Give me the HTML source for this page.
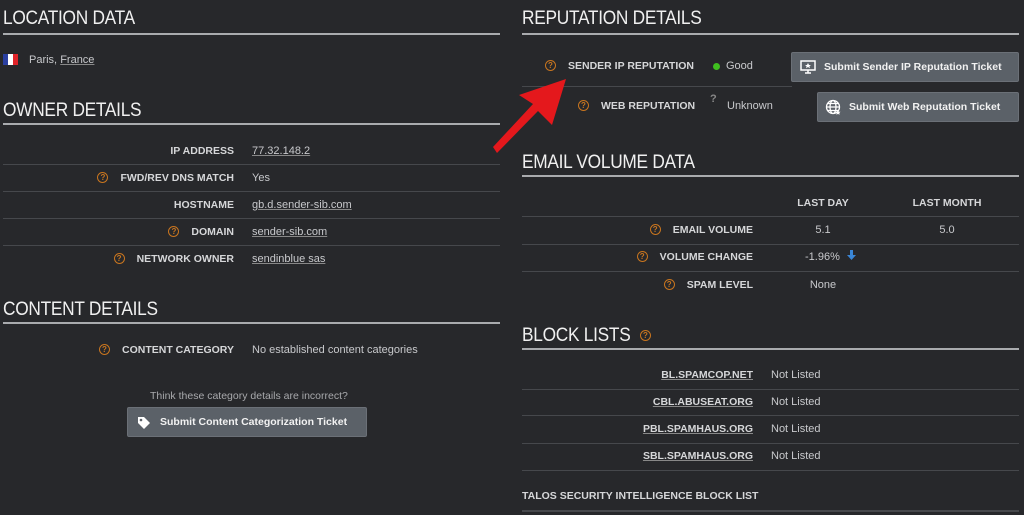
<!DOCTYPE html>
<html><head><meta charset="utf-8"><style>
*{margin:0;padding:0;box-sizing:border-box}
body{width:1024px;height:515px;background:#27282b;font-family:"Liberation Sans",sans-serif;color:#c8c9cc;position:relative;overflow:hidden}
.a{position:absolute;white-space:nowrap}
h2{position:absolute;font-weight:normal;font-size:19px;color:#f0f0f0;letter-spacing:-0.3px;white-space:nowrap;transform:scaleX(0.91);transform-origin:left}
.hl{position:absolute;height:2px;background:#a9abae}
.rl{position:absolute;height:1px;background:#46484c}
.lb{position:absolute;font-size:10.5px;font-weight:bold;color:#d6d7d9;white-space:nowrap;text-align:right;line-height:14px}
.v{position:absolute;font-size:11px;color:#c8c9cc;white-space:nowrap;line-height:14px}
.u{text-decoration:underline;text-decoration-color:#888}
.q{display:inline-block;width:11px;height:11px;border:1.3px solid #c8751f;border-radius:50%;color:#c8751f;font-size:8px;line-height:9px;text-align:center;font-weight:bold;vertical-align:top;margin-top:1px;margin-right:12px}
.btn{position:absolute;background:#5b6168;border:1px solid #6b7077;border-radius:2px;color:#f2f2f2;font-size:10.5px;font-weight:bold;line-height:28px;white-space:nowrap}
</style></head><body>
<!-- LEFT -->
<h2 style="left:3px;top:8px">LOCATION DATA</h2>
<div class="hl" style="left:3px;top:33px;width:497px"></div>
<div class="a" style="left:3px;top:54px;width:15px;height:11px;background:linear-gradient(90deg,#2a3fa0 0 33%,#fff 33% 66%,#e0242a 66%)"></div>
<div class="v" style="left:29px;top:53px">Paris, <span class="u">France</span></div>

<h2 style="left:3px;top:100px">OWNER DETAILS</h2>
<div class="hl" style="left:3px;top:123px;width:497px"></div>
<div class="lb" style="right:790px;top:144px">IP ADDRESS</div><div class="v u" style="left:252px;top:144px">77.32.148.2</div>
<div class="rl" style="left:3px;top:164px;width:497px"></div>
<div class="lb" style="right:790px;top:171px"><span class="q">?</span>FWD/REV DNS MATCH</div><div class="v" style="left:252px;top:171px">Yes</div>
<div class="rl" style="left:3px;top:191px;width:497px"></div>
<div class="lb" style="right:790px;top:198px">HOSTNAME</div><div class="v u" style="left:252px;top:198px">gb.d.sender-sib.com</div>
<div class="rl" style="left:3px;top:218px;width:497px"></div>
<div class="lb" style="right:790px;top:225px"><span class="q">?</span>DOMAIN</div><div class="v u" style="left:252px;top:225px">sender-sib.com</div>
<div class="rl" style="left:3px;top:245px;width:497px"></div>
<div class="lb" style="right:790px;top:252px"><span class="q">?</span>NETWORK OWNER</div><div class="v u" style="left:252px;top:252px">sendinblue sas</div>

<h2 style="left:3px;top:299px">CONTENT DETAILS</h2>
<div class="hl" style="left:3px;top:322px;width:497px"></div>
<div class="lb" style="right:790px;top:343px"><span class="q">?</span>CONTENT CATEGORY</div><div class="v" style="left:252px;top:343px">No established content categories</div>
<div class="v" style="left:150px;top:389px;color:#a8a9ac;font-size:10.5px">Think these category details are incorrect?</div>
<div class="btn" style="left:127px;top:407px;width:240px;height:30px;padding-left:32px">
<svg style="position:absolute;left:9px;top:8px" width="14" height="14" viewBox="0 0 14 14"><path d="M1 1h6l6 6-6 6-6-6z" fill="#fff"/><circle cx="4" cy="4" r="1.3" fill="#5b6168"/></svg>Submit Content Categorization Ticket</div>

<!-- RIGHT -->
<h2 style="left:522px;top:8px">REPUTATION DETAILS</h2>
<div class="hl" style="left:522px;top:33px;width:497px"></div>
<div class="lb" style="left:545px;top:59px"><span class="q">?</span>SENDER IP REPUTATION</div>
<div class="a" style="left:713px;top:63px;width:7px;height:7px;border-radius:50%;background:#3fbf1f"></div>
<div class="v" style="left:726px;top:59px">Good</div>
<div class="btn" style="left:791px;top:52px;width:228px;height:30px;padding-left:32px">
<svg style="position:absolute;left:8px;top:7px" width="16" height="15" viewBox="0 0 16 15"><rect x="1" y="1" width="14" height="9" fill="none" stroke="#fff" stroke-width="1.5"/><path d="M5 13h6M8 10v3" stroke="#fff" stroke-width="1.5"/><path d="M8 3l1 2h2l-1.6 1.2.6 2-2-1.2-2 1.2.6-2L5 5h2z" fill="#fff"/></svg>Submit Sender IP Reputation Ticket</div>
<div class="rl" style="left:522px;top:86px;width:270px"></div>
<div class="lb" style="left:578px;top:99px"><span class="q">?</span>WEB REPUTATION</div>
<div class="v" style="left:710px;top:92px;color:#888;font-weight:bold">?</div>
<div class="v" style="left:727px;top:99px">Unknown</div>
<div class="btn" style="left:817px;top:92px;width:202px;height:30px;padding-left:31px">
<svg style="position:absolute;left:7px;top:6px" width="17" height="17" viewBox="0 0 17 17" fill="none" stroke="#fff" stroke-width="1.3"><circle cx="8" cy="8" r="6.5"/><ellipse cx="8" cy="8" rx="3" ry="6.5"/><path d="M1.5 8h13M2.5 4.5h11M2.5 11.5h11"/><path d="M13 11l.8 1.6 1.7.2-1.2 1.2.3 1.7-1.6-.8-1.6.8.3-1.7-1.2-1.2 1.7-.2z" fill="#fff" stroke="none"/></svg>Submit Web Reputation Ticket</div>

<h2 style="left:522px;top:152px">EMAIL VOLUME DATA</h2>
<div class="hl" style="left:522px;top:175px;width:497px"></div>
<div class="lb" style="left:773px;top:196px;width:100px;text-align:center">LAST DAY</div>
<div class="lb" style="left:897px;top:196px;width:100px;text-align:center">LAST MONTH</div>
<div class="rl" style="left:522px;top:216px;width:497px"></div>
<div class="lb" style="right:271px;top:223px"><span class="q">?</span>EMAIL VOLUME</div>
<div class="v" style="left:773px;top:223px;width:100px;text-align:center">5.1</div>
<div class="v" style="left:897px;top:223px;width:100px;text-align:center">5.0</div>
<div class="rl" style="left:522px;top:244px;width:497px"></div>
<div class="lb" style="right:271px;top:250px"><span class="q">?</span>VOLUME CHANGE</div>
<div class="v" style="left:805px;top:250px">-1.96%</div>
<svg class="a" style="left:847px;top:250px" width="9" height="11" viewBox="0 0 9 11"><path d="M3 0h3v5h3L4.5 10 0 5h3z" fill="#3a86d6"/></svg>
<div class="rl" style="left:522px;top:271px;width:497px"></div>
<div class="lb" style="right:271px;top:278px"><span class="q">?</span>SPAM LEVEL</div>
<div class="v" style="left:773px;top:278px;width:100px;text-align:center">None</div>

<h2 style="left:522px;top:325px">BLOCK LISTS</h2>
<span class="q a" style="left:640px;top:329px">?</span>
<div class="hl" style="left:522px;top:348px;width:497px"></div>
<div class="lb u" style="right:271px;top:368px">BL.SPAMCOP.NET</div><div class="v" style="left:771px;top:368px">Not Listed</div>
<div class="rl" style="left:522px;top:389px;width:497px"></div>
<div class="lb u" style="right:271px;top:395px">CBL.ABUSEAT.ORG</div><div class="v" style="left:771px;top:395px">Not Listed</div>
<div class="rl" style="left:522px;top:415px;width:497px"></div>
<div class="lb u" style="right:271px;top:422px">PBL.SPAMHAUS.ORG</div><div class="v" style="left:771px;top:422px">Not Listed</div>
<div class="rl" style="left:522px;top:443px;width:497px"></div>
<div class="lb u" style="right:271px;top:449px">SBL.SPAMHAUS.ORG</div><div class="v" style="left:771px;top:449px">Not Listed</div>
<div class="rl" style="left:522px;top:470px;width:497px"></div>
<div class="lb" style="left:522px;top:489px">TALOS SECURITY INTELLIGENCE BLOCK LIST</div>
<div class="rl" style="left:522px;top:510px;width:497px;height:2px"></div>

<!-- arrow -->
<svg class="a" style="left:0;top:0" width="1024" height="515"><polygon points="566,79 519,95 533,104 493,147 497,153 538,111 552,125" fill="#e4181c"/></svg>
</body></html>
